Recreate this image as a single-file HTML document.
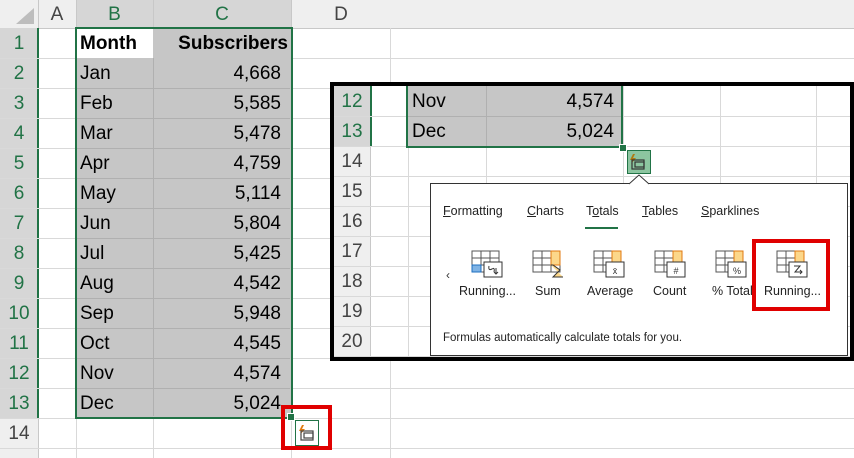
<!DOCTYPE html>
<html><head><style>
body{margin:0;width:854px;height:458px;overflow:hidden;background:#fff;font-family:"Liberation Sans",Arial,sans-serif;position:relative}
.a{position:absolute}
.hl{position:absolute;height:1px;background:#d9d9d9}
.vl{position:absolute;width:1px;background:#d9d9d9}
.rh{position:absolute;width:38px;text-align:center;font-size:19px;color:#444;}
.c{position:absolute;font-size:19px;color:#000}
.pt{font-family:"Liberation Sans",Arial,sans-serif;font-size:12.5px;color:#222}
</style></head><body>
<div class="a" style="left:0;top:0;width:854px;height:28px;background:#efefef;border-bottom:1px solid #c8c8c8"></div>
<div class="a" style="left:0;top:0;width:38px;height:458px;background:#efefef;border-right:1px solid #c8c8c8"></div>
<div class="a" style="left:76px;top:0;width:216px;height:27px;background:#d6d6d6;border-bottom:2px solid #217346"></div>
<div class="a" style="left:0;top:28px;width:37px;height:390px;background:#d6d6d6;border-right:2px solid #217346"></div>
<svg class="a" style="left:12px;top:6px" width="24" height="20"><polygon points="22,2 22,18 4,18" fill="#bdbdbd"/></svg>
<div class="a" style="left:38px;top:4px;width:38px;text-align:center;font-size:19px;color:#444">A</div>
<div class="a" style="left:76px;top:4px;width:77px;text-align:center;font-size:19px;color:#217346">B</div>
<div class="a" style="left:153px;top:4px;width:138px;text-align:center;font-size:19px;color:#217346">C</div>
<div class="a" style="left:291px;top:4px;width:100px;text-align:center;font-size:19px;color:#444">D</div>
<div class="vl" style="left:76px;top:0;height:28px;background:#c8c8c8"></div>
<div class="vl" style="left:153px;top:0;height:28px;background:#c8c8c8"></div>
<div class="vl" style="left:291px;top:0;height:28px;background:#c8c8c8"></div>
<div id="g"></div>
<div class="a" style="left:76px;top:58px;width:216px;height:360px;background:#c6c6c6"></div>
<div class="a" style="left:153px;top:28px;width:139px;height:30px;background:#c6c6c6"></div>
<div class="a" style="left:75px;top:27px;width:214px;height:388px;border:2px solid #217346"></div>
<div class="a" style="left:287px;top:413px;width:6px;height:6px;background:#217346;border:1px solid #fff"></div>
<script>
var h='';
for(var i=1;i<=14;i++){var y=28+(i-1)*30;
h+='<div class="rh" style="left:0;top:'+(y+5)+'px;color:'+(i<=13?'#217346':'#444')+'">'+i+'</div>';
h+='<div class="hl" style="left:0;top:'+(y+30)+'px;width:854px"></div>';}
h+='<div class="vl" style="left:153px;top:28px;height:430px"></div><div class="vl" style="left:291px;top:28px;height:430px"></div><div class="vl" style="left:76px;top:28px;height:430px"></div><div class="vl" style="left:390px;top:28px;height:430px"></div>';
document.getElementById('g').innerHTML=h;
</script>
<div class="c" style="left:80px;top:33px;font-weight:bold">Month</div>
<div class="c" style="left:153px;top:33px;width:135px;text-align:right;font-weight:bold">Subscribers</div>
<div id="d"></div>
<script>
var m=[["Jan","4,668"],["Feb","5,585"],["Mar","5,478"],["Apr","4,759"],["May","5,114"],["Jun","5,804"],["Jul","5,425"],["Aug","4,542"],["Sep","5,948"],["Oct","4,545"],["Nov","4,574"],["Dec","5,024"]];
var s='';for(var i=0;i<12;i++){var y=63+i*30;
s+='<div class="c" style="left:80px;top:'+y+'px">'+m[i][0]+'</div><div class="c" style="left:153px;top:'+y+'px;width:128px;text-align:right">'+m[i][1]+'</div>';
if(i<11)s+='<div class="a" style="left:77px;top:'+(y+25)+'px;width:213px;height:1px;background:#b0b0b0"></div>';}
s+='<div class="a" style="left:153px;top:58px;width:1px;height:358px;background:#b0b0b0"></div>';
document.getElementById('d').innerHTML=s;
</script>
<div class="a" style="left:295px;top:420px;width:22px;height:24px;border:1px solid #217346;background:#fff"></div>
<svg class="a" style="left:297px;top:423px" width="20" height="20"><path d="M5 2 L2 8 L5 8 L3 12 L8 6 L5 6 L7 2Z" fill="#e07a10"/><rect x="4" y="8" width="12" height="9" fill="none" stroke="#444" stroke-width="1.2"/><rect x="7" y="10" width="9" height="5" fill="none" stroke="#444" stroke-width="1.2"/></svg>
<div class="a" style="left:281px;top:405px;width:43px;height:37px;border:4px solid #e00000"></div>

<div class="a" style="left:330px;top:82px;width:516px;height:271px;border:4px solid #000;background:#fff;overflow:hidden">
 <div class="a" style="left:0;top:0;width:36px;height:271px;background:#efefef;border-right:1px solid #c8c8c8"></div>
 <div class="a" style="left:0;top:0;width:36px;height:60px;background:#d6d6d6;border-right:2px solid #217346"></div>
 <div id="p"></div>
 <div class="a" style="left:74px;top:0;width:215px;height:60px;background:#c6c6c6"></div>
 <div class="a" style="left:152px;top:0;width:1px;height:60px;background:#b0b0b0"></div>
 <div class="a" style="left:74px;top:30px;width:215px;height:1px;background:#b0b0b0"></div>
 <div class="a" style="left:72px;top:-4px;width:213px;height:62px;border:2px solid #217346"></div>
 <div class="a" style="left:285px;top:58px;width:6px;height:6px;background:#217346;border:1px solid #fff"></div>
 <div class="c" style="left:78px;top:5px">Nov</div><div class="c" style="left:152px;top:5px;width:128px;text-align:right">4,574</div>
 <div class="c" style="left:78px;top:35px">Dec</div><div class="c" style="left:152px;top:35px;width:128px;text-align:right">5,024</div>
 <div class="a" style="left:293px;top:64px;width:22px;height:22px;border:1px solid #217346;background:#8cc5a0"></div>
 <svg class="a" style="left:294px;top:66px" width="20" height="20"><path d="M5 2 L2 8 L5 8 L3 12 L8 6 L5 6 L7 2Z" fill="#b07a10"/><rect x="4" y="8" width="12" height="9" fill="none" stroke="#333" stroke-width="1.2"/><rect x="7" y="10" width="9" height="5" fill="none" stroke="#333" stroke-width="1.2"/></svg>
</div>
<script>
var p='';for(var i=0;i<9;i++){var y=i*30;
p+='<div class="rh" style="left:0;top:'+(y+5)+'px;width:36px;color:'+(i<2?'#217346':'#444')+'">'+(12+i)+'</div>';
p+='<div class="hl" style="left:0;top:'+(y+30)+'px;width:520px"></div>';}
[74,152,289,386,482].forEach(function(x){p+='<div class="vl" style="left:'+x+'px;top:0;height:271px"></div>'});
document.getElementById('p').innerHTML=p;
</script>
<div class="a" style="left:430px;top:183px;width:416px;height:171px;border:1px solid #333;background:#fff"></div>
<svg class="a" style="left:629px;top:174px" width="22" height="11"><path d="M0 10 L10 1 L20 10" fill="#fff" stroke="#333" stroke-width="1"/></svg>
<div class="a pt" style="top:204px;left:443px">
<span class="a" style="left:0;white-space:nowrap"><u>F</u>ormatting</span>
<span class="a" style="left:84px"><u>C</u>harts</span>
<span class="a" style="left:143px">T<u>o</u>tals</span>
<span class="a" style="left:199px"><u>T</u>ables</span>
<span class="a" style="left:258px"><u>S</u>parklines</span>
</div>
<div class="a" style="left:585px;top:227px;width:33px;height:2px;background:#217346"></div>
<div class="a" style="left:446px;top:268px;font-size:12px;color:#333">‹</div>
<svg class="a" style="left:440px;top:240px" width="400" height="45" font-family="Liberation Sans">
 <g stroke="#555" stroke-width="1" fill="none">
  <g transform="translate(32,11)"><rect x="0" y="0" width="27" height="21"/><path d="M9 0V21M18 0V21M0 7H27M0 14H27"/><rect x="0" y="14" width="9" height="7" fill="#7fb3e5" stroke="#1e6fc0"/><rect x="12" y="11" width="18" height="15" fill="#fff" stroke="#333"/><path d="M17 15 Q16 20 20 18 Q23 16 22 21 M24 17V23 M22 21L24 23 26 21" stroke="#333"/></g>
  <g transform="translate(93,11)"><rect x="0" y="0" width="27" height="21"/><path d="M9 0V21M18 0V21M0 7H27M0 14H27"/><rect x="18" y="0" width="9" height="14" fill="#fcd78a" stroke="#e07a10"/><path d="M18 14H20L27 19 20 26H30" fill="#fcd78a" stroke="#333"/></g>
  <g transform="translate(154,11)"><rect x="0" y="0" width="27" height="21"/><path d="M9 0V21M18 0V21M0 7H27M0 14H27"/><rect x="18" y="0" width="9" height="14" fill="#fcd78a" stroke="#e07a10"/><rect x="12" y="11" width="18" height="15" fill="#fff" stroke="#333"/><text x="21" y="23" font-size="9" fill="#333" stroke="none" text-anchor="middle">x̄</text></g>
  <g transform="translate(215,11)"><rect x="0" y="0" width="27" height="21"/><path d="M9 0V21M18 0V21M0 7H27M0 14H27"/><rect x="18" y="0" width="9" height="14" fill="#fcd78a" stroke="#e07a10"/><rect x="12" y="11" width="18" height="15" fill="#fff" stroke="#333"/><text x="21" y="23" font-size="9" fill="#333" stroke="none" text-anchor="middle">#</text></g>
  <g transform="translate(276,11)"><rect x="0" y="0" width="27" height="21"/><path d="M9 0V21M18 0V21M0 7H27M0 14H27"/><rect x="18" y="0" width="9" height="14" fill="#fcd78a" stroke="#e07a10"/><rect x="12" y="11" width="18" height="15" fill="#fff" stroke="#333"/><text x="21" y="23" font-size="9" fill="#333" stroke="none" text-anchor="middle">%</text></g>
  <g transform="translate(337,11)"><rect x="0" y="0" width="27" height="21"/><path d="M9 0V21M18 0V21M0 7H27M0 14H27"/><rect x="18" y="0" width="9" height="14" fill="#fcd78a" stroke="#e07a10"/><rect x="12" y="11" width="18" height="15" fill="#fff" stroke="#333"/><path d="M17 15H23L18 21H25M23 19L25 21 23 23" stroke="#333"/></g>
 </g>
</svg>
<div class="a pt" style="top:284px;left:430px">
<span class="a" style="left:29px;white-space:nowrap">Running...</span>
<span class="a" style="left:105px">Sum</span>
<span class="a" style="left:157px">Average</span>
<span class="a" style="left:223px">Count</span>
<span class="a" style="left:282px;white-space:nowrap">% Total</span>
<span class="a" style="left:334px;white-space:nowrap">Running...</span>
</div>
<div class="a pt" style="left:443px;top:332px;font-size:11.5px;white-space:nowrap">Formulas automatically calculate totals for you.</div>
<div class="a" style="left:752px;top:239px;width:70px;height:64px;border:4px solid #e00000"></div>
</body></html>
